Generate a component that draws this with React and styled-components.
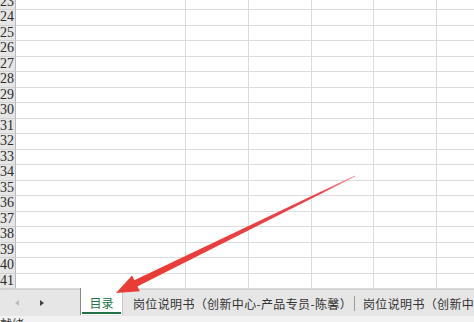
import React from "react";
import styled, { createGlobalStyle } from "styled-components";

const Global = createGlobalStyle`
  html, body { margin: 0; padding: 0; background: #ffffff; }
  body { font-family: "Noto Sans CJK SC", "Liberation Sans", sans-serif; }
`;

const Page = styled.div`
  position: relative;
  width: 474px;
  height: 322px;
  overflow: hidden;
  display: flex;
  flex-direction: column;
  background: #fff;
`;

const Sheet = styled.div`
  height: 289px;
  flex: none;
  overflow: hidden;
`;

const Rows = styled.div`
  margin-top: -5.5px;
`;

const Row = styled.div`
  display: grid;
  grid-template-columns: 16px 170px repeat(5, 62.8px);
  height: 15.5px;
`;

const RowHeader = styled.div`
  box-sizing: border-box;
  background: #e6e6e6;
  border-right: 1px solid #b9b9b9;
  border-bottom: 1px solid #d2d2d2;
  display: flex;
  align-items: center;
  justify-content: flex-end;
  padding-right: 1px;
  overflow: hidden;
  font-family: "Liberation Serif", "DejaVu Serif", serif;
  font-size: 14px;
  line-height: 1;
  color: #2b2b2b;
  white-space: nowrap;
`;

const Cell = styled.div`
  box-sizing: border-box;
  border-right: 1px solid #dcdcdc;
  border-bottom: 1px solid #dcdcdc;
`;

const TabBar = styled.div`
  box-sizing: border-box;
  height: 27px;
  flex: none;
  background: #e6e6e6;
  border-top: 1px solid #d0d0d0;
  display: flex;
  align-items: stretch;
  white-space: nowrap;
  font-size: 12px;
  color: #333;
`;

const Nav = styled.div`
  width: 80px;
  flex: none;
  display: flex;
  align-items: center;
`;

const NavArrow = styled.span`
  width: 0;
  height: 0;
  border-top: 3.5px solid transparent;
  border-bottom: 3.5px solid transparent;
  ${(p) =>
    p.$dir === "left"
      ? `border-right: 4px solid ${p.$active ? "#444" : "#bdbdbd"};`
      : `border-left: 4px solid ${p.$active ? "#444" : "#bdbdbd"};`}
  margin-left: ${(p) => p.$offset}px;
`;

const ActiveTab = styled.div`
  box-sizing: border-box;
  width: 43px;
  flex: none;
  margin-top: -2px;
  margin-bottom: 1px;
  background: #fff;
  border-left: 1px solid #8a8a8a;
  border-right: 1px solid #c8c8c8;
  display: flex;
  align-items: center;
  justify-content: center;
  color: #217346;
  position: relative;
  padding-top: 1px;
  &::after {
    content: "";
    position: absolute;
    left: 1px;
    right: 1px;
    bottom: 1px;
    height: 2px;
    background: #217346;
  }
`;

const Tab = styled.div`
  flex: none;
  display: flex;
  align-items: center;
  letter-spacing: 0.35px;
  padding: 0 0 0 ${(p) => p.$pad}px;
`;

const Separator = styled.span`
  flex: none;
  align-self: center;
  width: 1px;
  height: 15px;
  background: #9c9c9c;
  margin-left: 2px;
`;

const StatusBar = styled.div`
  flex: 1;
  background: #f2f2f2;
  font-size: 12px;
  color: #333;
  padding: 1px 0 0 0;
  line-height: 14px;
  white-space: nowrap;
`;

const ArrowLayer = styled.svg`
  position: absolute;
  left: 0;
  top: 0;
  pointer-events: none;
`;

const rowNums = Array.from({ length: 19 }, (_, i) => 23 + i);

export default function App() {
  return (
    <Page>
      <Global />
      <Sheet>
        <Rows>
          {rowNums.map((n) => (
            <Row key={n}>
              <RowHeader>{n}</RowHeader>
              {Array.from({ length: 6 }, (_, i) => (
                <Cell key={i} />
              ))}
            </Row>
          ))}
        </Rows>
      </Sheet>
      <TabBar>
        <Nav>
          <NavArrow $dir="left" $offset={15} />
          <NavArrow $dir="right" $active $offset={21} />
        </Nav>
        <ActiveTab>目录</ActiveTab>
        <Tab $pad={10}>岗位说明书（创新中心-产品专员-陈馨）</Tab>
        <Separator />
        <Tab $pad={8}>岗位说明书（创新中心-产品专员-陈馨）</Tab>
      </TabBar>
      <StatusBar>就绪</StatusBar>
      <ArrowLayer width="474" height="322" viewBox="0 0 474 322">
        <defs>
          <linearGradient id="shaft" x1="355" y1="176" x2="130" y2="286" gradientUnits="userSpaceOnUse">
            <stop offset="0" stopColor="#f3a0a8" />
            <stop offset="0.15" stopColor="#e8434a" />
            <stop offset="1" stopColor="#ea3b34" />
          </linearGradient>
        </defs>
        <polygon
          points="355.2,176.4 133.8,288.3 130.6,281.9 354.8,175.6"
          fill="url(#shaft)"
        />
        <polygon points="116,293 139.8,291.2 132.0,275.4" fill="#ea3b34" />
      </ArrowLayer>
    </Page>
  );
}
